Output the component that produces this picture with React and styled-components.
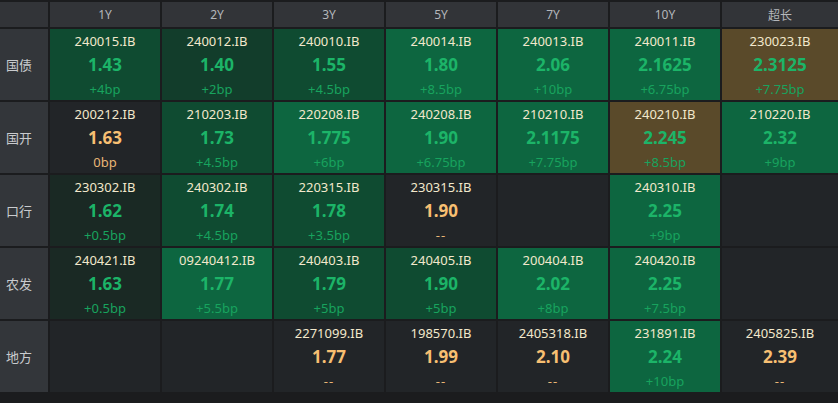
import React from 'react';
import styled, { createGlobalStyle } from 'styled-components';

const GlobalStyle = createGlobalStyle`
  html, body {
    margin: 0;
    padding: 0;
    background: #1b1c1e;
  }
  body {
    font-family: 'Noto Sans', 'Noto Sans CJK SC', sans-serif;
  }
`;

const tones = {
  bright: '#0d6640',
  mid: '#0f4b31',
  deep: '#123d2b',
  faint: '#1a2924',
  brown: '#5a4a2a',
  none: '#222528',
};

const Board = styled.div`
  display: grid;
  grid-template-columns: 48px repeat(6, 110px) 1fr;
  grid-template-rows: 25px repeat(5, 71px);
  gap: 2px;
  padding-top: 2px;
  width: 838px;
  height: 403px;
  box-sizing: border-box;
  background: #1b1c1e;
  align-content: start;
`;

const HeadCell = styled.div`
  background: #323438;
  color: #b4b7bb;
  font-size: 12px;
  display: flex;
  align-items: center;
  justify-content: center;
`;

const RowLabel = styled.div`
  background: #33363a;
  color: #c9cbce;
  font-size: 13px;
  display: flex;
  align-items: center;
  padding-left: 6px;
`;

const Cell = styled.div`
  background: ${(p) => tones[p.$tone]};
  display: flex;
  flex-direction: column;
  align-items: center;
  justify-content: center;
`;

const Code = styled.div`
  color: #f2e8cc;
  font-size: 13px;
  line-height: 24px;
`;

const Value = styled.div`
  color: ${(p) => (p.$warm ? '#f7bf72' : '#1cb468')};
  font-size: 17px;
  font-weight: 700;
  line-height: 24px;
`;

const Spread = styled.div`
  color: ${(p) => (p.$warm ? '#e9b676' : '#18a35e')};
  font-size: 13px;
  line-height: 24px;
  letter-spacing: ${(p) => (p.$dash ? '1px' : '0')};
`;

const terms = ['1Y', '2Y', '3Y', '5Y', '7Y', '10Y', '超长'];

const rows = [
  {
    name: '国债',
    cells: [
      ['mid', '240015.IB', '1.43', '+4bp'],
      ['deep', '240012.IB', '1.40', '+2bp'],
      ['mid', '240010.IB', '1.55', '+4.5bp'],
      ['bright', '240014.IB', '1.80', '+8.5bp'],
      ['bright', '240013.IB', '2.06', '+10bp'],
      ['bright', '240011.IB', '2.1625', '+6.75bp'],
      ['brown', '230023.IB', '2.3125', '+7.75bp'],
    ],
  },
  {
    name: '国开',
    cells: [
      ['none', '200212.IB', '1.63', '0bp', true],
      ['mid', '210203.IB', '1.73', '+4.5bp'],
      ['bright', '220208.IB', '1.775', '+6bp'],
      ['bright', '240208.IB', '1.90', '+6.75bp'],
      ['bright', '210210.IB', '2.1175', '+7.75bp'],
      ['brown', '240210.IB', '2.245', '+8.5bp'],
      ['bright', '210220.IB', '2.32', '+9bp'],
    ],
  },
  {
    name: '口行',
    cells: [
      ['faint', '230302.IB', '1.62', '+0.5bp'],
      ['mid', '240302.IB', '1.74', '+4.5bp'],
      ['mid', '220315.IB', '1.78', '+3.5bp'],
      ['none', '230315.IB', '1.90', '--', true],
      null,
      ['bright', '240310.IB', '2.25', '+9bp'],
      null,
    ],
  },
  {
    name: '农发',
    cells: [
      ['faint', '240421.IB', '1.63', '+0.5bp'],
      ['bright', '09240412.IB', '1.77', '+5.5bp'],
      ['mid', '240403.IB', '1.79', '+5bp'],
      ['mid', '240405.IB', '1.90', '+5bp'],
      ['bright', '200404.IB', '2.02', '+8bp'],
      ['bright', '240420.IB', '2.25', '+7.5bp'],
      null,
    ],
  },
  {
    name: '地方',
    cells: [
      null,
      null,
      ['none', '2271099.IB', '1.77', '--', true],
      ['none', '198570.IB', '1.99', '--', true],
      ['none', '2405318.IB', '2.10', '--', true],
      ['bright', '231891.IB', '2.24', '+10bp'],
      ['none', '2405825.IB', '2.39', '--', true],
    ],
  },
];

const Quote = ({ data }) => {
  if (!data) return <Cell $tone="none" />;
  const [tone, code, value, spread, warm] = data;
  return (
    <Cell $tone={tone}>
      <Code>{code}</Code>
      <Value $warm={warm}>{value}</Value>
      <Spread $warm={warm} $dash={spread === '--'}>{spread}</Spread>
    </Cell>
  );
};

export default function App() {
  return (
    <>
      <GlobalStyle />
      <Board>
        <HeadCell />
        {terms.map((t) => (
          <HeadCell key={t}>{t}</HeadCell>
        ))}
        {rows.map((r) => (
          <React.Fragment key={r.name}>
            <RowLabel>{r.name}</RowLabel>
            {r.cells.map((c, i) => (
              <Quote key={i} data={c} />
            ))}
          </React.Fragment>
        ))}
      </Board>
    </>
  );
}
